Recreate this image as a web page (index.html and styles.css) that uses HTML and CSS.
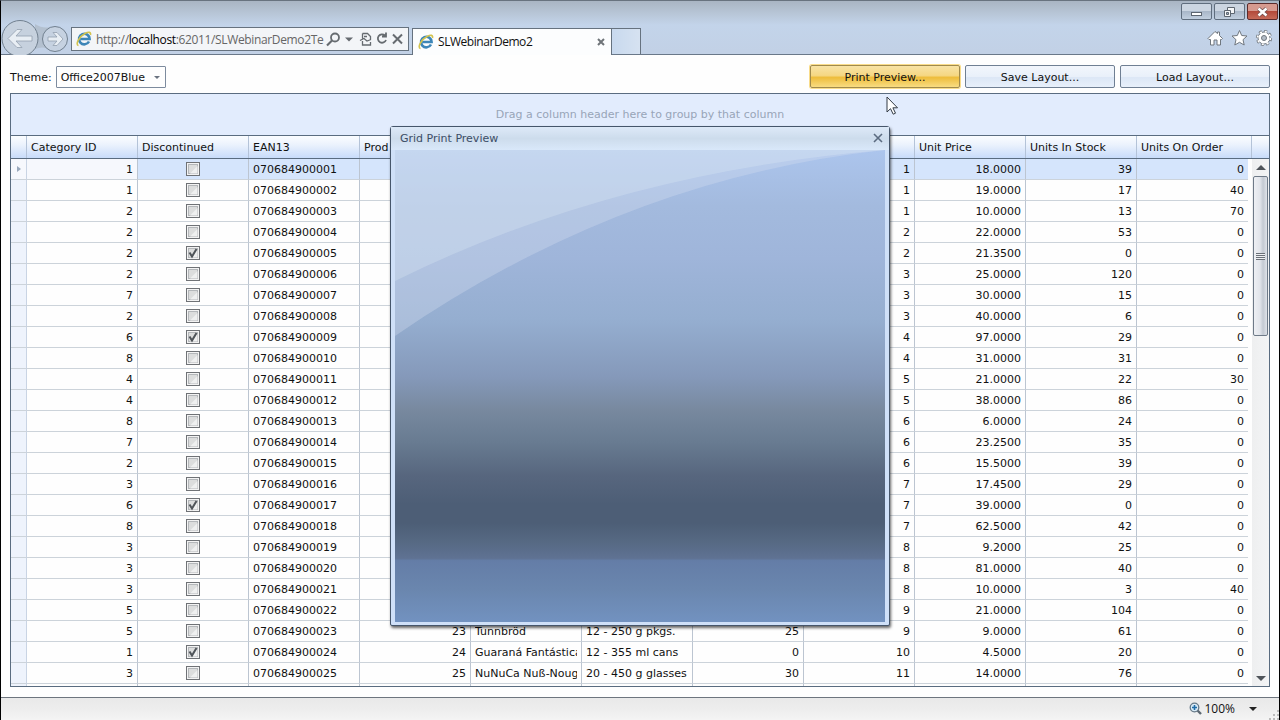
FILE: index.html
```html
<!DOCTYPE html>
<html lang="en">
<head>
  <meta charset="UTF-8">
  <title>SLWebinarDemo2</title>
  <link rel="stylesheet" href="styles.css">
</head>
<body>
  <!-- shared icon -->
  <svg width="0" height="0" class="defs">
    <symbol id="ie" viewBox="0 0 16 16">
      <path d="M13 10.5A5.3 5.3 0 1 1 13.6 8H4.5" fill="none" stroke="#3d86b8" stroke-width="2.6"/>
      <path d="M2.5 14.5C-1 14 3 5.500 9 2.500c4-2 6-1.500 5.500 1.500" fill="none" stroke="#d3c34d" stroke-width="1.600"/>
    </symbol>
  </svg>

  <div class="window">
    <header class="chrome">
      <div class="nav">
        <svg width="70" height="37" viewBox="0 0 70 37">
          <path d="M34 6q8 5 15 3v22q-8-3-15 0z" fill="#b3c0cf"/>
          <circle cx="19" cy="20.500" r="18" fill="#c6d1de" stroke="#71808f"/>
          <circle cx="54" cy="21" r="12.500" fill="#c6d2e1" stroke="#71808f"/>
          <path d="M7 20.500l9-9h5l-6 6.500h16v5H15l6 6.500h-5z" fill="#e8eef4" stroke="#93a0ae" stroke-width=".8"/>
          <path d="M62 21l-6-6.500h-4l4 4.500h-9v4h9l-4 4.500h4z" fill="#e8eef4" stroke="#93a0ae" stroke-width=".8"/>
        </svg>
      </div>
      <div class="address">
        <svg width="16" height="16"><use href="#ie"/></svg>
        <span class="url">http://<b>localhost</b>:62011/SLWebinarDemo2Te</span>
        <svg class="address-icons" width="82" height="20" viewBox="0 0 82 20" fill="none" stroke="#666b70" stroke-width="1.800">
          <circle cx="9" cy="8.500" r="4"/>
          <path d="M6 11.500l-5 5" stroke-width="2.200"/>
          <path d="M19 8.500h8l-4 4z" fill="#666b70" stroke="none"/>
          <path d="M36.500 4.500h5l3 3v3M36.500 4.500v5M36.500 12v4h8v-3M34 11.500l4-2 3 2.500 4-1.500M38 7.500h3" stroke-width="1.300"/>
          <path d="M59 6.500A4.200 4.200 0 1 0 60 11M60 3.500v4h-4"/>
          <path d="M67 5.500l9 9M76 5.500l-9 9" stroke-width="2"/>
        </svg>
      </div>
      <div class="tab">
        <svg width="16" height="16"><use href="#ie"/></svg>
        <span>SLWebinarDemo2</span>
        <svg class="tab-close" width="8" height="8" viewBox="0 0 8 8"><path d="M1 1l6 6M7 1L1 7" stroke="#6f7479" stroke-width="2"/></svg>
      </div>
      <div class="new-tab"></div>
      <div class="window-tools">
        <div class="window-buttons">
          <span><svg width="29" height="15" viewBox="0 0 29 15"><rect x="9.500" y="8.500" width="10" height="3" fill="#fff" stroke="#5d6670"/></svg></span>
          <span><svg width="29" height="15" viewBox="0 0 29 15" fill="#f4f6f8" stroke="#5d6670"><path d="M12.500 3.500h7v6h-7z"/><path d="M9.500 6.500h6v6h-6z"/><path d="M11.500 8.500h2v2h-2z" fill="#9fb0c2"/></svg></span>
          <span class="close"><svg width="29" height="15" viewBox="0 0 29 15"><path d="M10.500 4.500l8 7M18.500 4.500l-8 7" stroke="#6d4a4a" stroke-width="4"/><path d="M10.500 4.500l8 7M18.500 4.500l-8 7" stroke="#fff" stroke-width="2.500"/></svg></span>
        </div>
        <svg class="tools" width="68" height="18" viewBox="0 0 68 18" fill="#fff" stroke="#70777e">
          <path d="M2 9.500L9 2.500l2.500 2V3h2v3.500L16.500 9.500l-1 1H14.500V16h-3.500v-5H8v5H4.500v-5.500H3z"/>
          <path d="M33.500 1.500l2.200 5 5.300.5-4 3.700 1.200 5.300-4.700-2.700-4.700 2.700L30 10.700 26 7l5.300-.5z"/>
          <g>
            <circle cx="58" cy="9" r="6.800" fill="none" stroke-width="2.600" stroke-dasharray="3 2.340"/>
            <circle cx="58" cy="9" r="6" stroke="#70777e"/>
            <circle cx="58" cy="9" r="6.400" fill="none" stroke="#fff" stroke-width="1.800" stroke-dasharray="2 3.030"/>
            <circle cx="58" cy="9" r="2.500" fill="#b5bec8"/>
          </g>
        </svg>
      </div>
    </header>

    <main class="page">
      <div class="toolbar">
        <label>Theme:</label>
        <div class="select">Office2007Blue<i class="arrow"></i></div>
        <button class="btn hot">Print Preview...</button>
        <button class="btn">Save Layout...</button>
        <button class="btn">Load Layout...</button>
      </div>

      <div class="grid">
        <div class="group-panel">Drag a column header here to group by that column</div>
        <div class="row head">
          <span></span><span>Category ID</span><span>Discontinued</span><span>EAN13</span>
          <span>Prod</span><span></span><span></span><span></span><span></span>
          <span>Unit Price</span><span>Units In Stock</span><span class="last">Units On Order</span>
        </div>
        <div class="grid-body">
          <div class="rows" id="rows"></div>
          <div class="scrollbar">
            <i class="up"></i>
            <div class="thumb"><i></i></div>
            <i class="down"></i>
          </div>
        </div>
      </div>
    </main>

    <footer class="status">
      <svg width="13" height="13" viewBox="0 0 13 13"><path d="M8 8l4 4" stroke="#5d6872" stroke-width="2.400"/><circle cx="5.500" cy="5.500" r="4.300" fill="#d9ebf7" stroke="#657887" stroke-width="1.300"/><path d="M3 5.500h5M5.500 3v5" stroke="#1f6da8" stroke-width="1.600"/></svg>
      <span>100%</span>
      <i class="arrow"></i>
      <svg class="grip" width="10" height="10" viewBox="0 0 10 10" fill="#bbb"><path d="M8 0h2v2H8zM8 4h2v2H8zM8 8h2v2H8zM4 4h2v2H4zM4 8h2v2H4zM0 8h2v2H0z"/></svg>
    </footer>
  </div>

  <div class="dialog">
    <div class="dialog-title">
      <span>Grid Print Preview</span>
      <svg width="10" height="10" viewBox="0 0 10 10"><path d="M1 1l8 8M9 1L1 9" stroke="#5b6b80" stroke-width="1.600"/></svg>
    </div>
    <div class="dialog-body">
      <svg width="490" height="190" viewBox="0 0 490 190">
        <path d="M0 0H490Q230 28 0 186z" fill="#d5dff0" fill-opacity=".34"/>
        <path d="M0 0H490Q220 22 0 131z" fill="#dfeaf5" fill-opacity=".3"/>
      </svg>
    </div>
  </div>

  <svg class="cursor" width="14" height="20" viewBox="0 0 14 20"><path d="M1 1v15l3.500-3.300 2.700 5.500 2.300-1-2.600-5.400h4.600z" fill="#fff" stroke="#333b45"/></svg>

  <script src="script.js"></script>
</body>
</html>
```
FILE: styles.css
```css
* {
  box-sizing: border-box;
}
body {
  margin: 0;
  width: 1280px;
  height: 720px;
  overflow: hidden;
  font: 11px "DejaVu Sans", Verdana, sans-serif;
  color: #111;
}
.defs {
  position: absolute;
}
.window {
  height: 720px;
  display: flex;
  flex-direction: column;
  border: 1px solid #000;
  border-top-color: #68737f;
  border-bottom: 0;
}

/* browser frame */
.chrome {
  height: 54px;
  flex: none;
  display: flex;
  align-items: flex-end;
  background: linear-gradient(#a9b5c3, #b7c5d6 12px, #c3d4ea 24px, #c2d1e6 50px);
  border-bottom: 1px solid #6a7889;
  font: 12px "Open Sans", "Segoe UI", sans-serif;
}
.nav {
  width: 70px;
  height: 37px;
  margin-bottom: -1px;
  overflow: hidden;
}
.nav svg {
  display: block;
}
.address {
  width: 338px;
  height: 24px;
  margin-bottom: 3px;
  padding: 0 0 0 4px;
  display: flex;
  align-items: center;
  border: 1px solid #66727f;
  background: #f3f5f8;
}
.url {
  width: 228px;
  margin-left: 4px;
  white-space: nowrap;
  letter-spacing: -.36px;
  color: #666;
}
.url b {
  font-weight: normal;
  color: #000;
}
.address-icons {
  margin-left: 2px;
}
.tab {
  width: 200px;
  height: 27px;
  margin: 0 0 -1px 3px;
  padding: 0 6px 0 5px;
  display: flex;
  align-items: center;
  gap: 4px;
  border: 1px solid #66727f;
  border-bottom: 0;
  background: #fcfdfe;
}
.tab span {
  margin-bottom: 1px;
  letter-spacing: -.45px;
}
.tab-close {
  margin-left: auto;
}
.new-tab {
  width: 29px;
  height: 26px;
  border: 1px solid #66727f;
  border-left: 0;
  border-bottom: 0;
  background: linear-gradient(90deg, #c8d9ee, #d6e2f1);
}
.window-tools {
  height: 53px;
  margin-left: auto;
  padding: 2px 1px 0 0;
  display: flex;
  flex-direction: column;
  align-items: flex-end;
  gap: 9px;
}
.tools {
  margin-right: 4px;
}
.window-buttons {
  display: flex;
  gap: 2px;
}
.window-buttons span {
  width: 31px;
  height: 17px;
  border: 1px solid #5f6d7d;
  border-radius: 2px;
  background: linear-gradient(#cbd5e1 50%, #a9b7c8 50%, #c1cfdf);
}
.window-buttons svg {
  display: block;
}
.window-buttons .close {
  border-color: #5c2c2c;
  background: linear-gradient(#d79a8f 50%, #b34a3b 50%, #c66a58);
}

/* page */
.page {
  flex: 1;
  padding: 9px 9px 0;
  background: #fefefe;
}
.toolbar {
  display: flex;
  align-items: center;
  gap: 5px;
  height: 25px;
  margin-bottom: 4px;
}
.toolbar label {
  padding-top: 1px;
}
.select {
  width: 110px;
  height: 22px;
  margin: 0 auto 0 -1px;
  padding: 1px 5px 0 4px;
  display: flex;
  align-items: center;
  justify-content: space-between;
  border: 1px solid #7d8b9e;
  border-radius: 1px;
}
.arrow {
  border: 3px solid transparent;
  border-top: 3px solid #6a7380;
  border-bottom: 0;
}
.btn {
  width: 150px;
  height: 23px;
  padding: 1px 0 0;
  border: 1px solid #6f7f93;
  border-radius: 2px;
  background: linear-gradient(#f2f6fc, #e9f0fa 50%, #dce7f6 55%, #e8f0fb);
  font: inherit;
  color: #111;
}
.btn.hot {
  border-color: #a08a4c;
  background: linear-gradient(#f8e3a6, #f5d783 45%, #eebd3c 55%, #f8dc82);
  box-shadow: 0 0 0 1px #f9dc8a;
}

/* data grid */
.grid {
  width: 1260px;
  height: 594px;
  display: flex;
  flex-direction: column;
  border: 1px solid #5a6c80;
}
.group-panel {
  height: 41px;
  flex: none;
  line-height: 42px;
  text-align: center;
  color: #98a5b8;
  background: #e2ecfd;
}
.row {
  display: grid;
  grid-template-columns: 16px repeat(11, 111px);
  height: 21px;
  line-height: 21px;
}
.row > * {
  padding: 0 4px;
  overflow: hidden;
  white-space: nowrap;
  border-right: 1px solid #bcc5d1;
  border-bottom: 1px solid #ccd3da;
}
.row .num {
  text-align: right;
}
.row > :last-child {
  border-right: 0;
}
.row .clip {
  overflow: hidden;
}
.row .ind {
  padding: 0;
  display: flex;
  align-items: center;
  justify-content: center;
  background: #eef3fc;
  border-right-color: #c9d4e4;
}
.row .ind i {
  border: 3px solid transparent;
  border-left: 4px solid #9aa9bd;
  border-right: 0;
}
.row.current > * {
  background: #d5e5fc;
}
.row.current > :nth-child(-n+2) {
  background: #f6f8fd;
}
.row.head {
  height: 24px;
  flex: none;
  grid-template-columns: 16px repeat(10, 111px) 115px;
  line-height: 23px;
  border-top: 1px solid #5a6c80;
  border-bottom: 1px solid #5a6c80;
  background: linear-gradient(#fbfdff, #ebf2fd 40%, #c8dcfa);
}
.row.head > * {
  border-bottom: 0;
  border-right-color: #b4c3d8;
}
.row.head > .last {
  border-right: 1px solid #b4c3d8;
}
.box {
  display: block;
  margin: 3px auto 0;
  width: 14px;
  height: 14px;
}
.grid-body {
  flex: 1;
  min-height: 0;
  display: flex;
  justify-content: space-between;
  overflow: hidden;
}
.scrollbar {
  width: 17px;
  padding: 6px 1px 5px;
  display: flex;
  flex-direction: column;
  align-items: center;
  background: linear-gradient(90deg, #eeeff0, #f3f4f5);
}
.up, .down {
  border: 5px solid transparent;
}
.up {
  border-top: 0;
  border-bottom-color: #50555b;
}
.down {
  margin-top: auto;
  border-bottom: 0;
  border-top-color: #50555b;
}
.thumb {
  width: 15px;
  height: 160px;
  margin-top: 6px;
  display: flex;
  align-items: center;
  justify-content: center;
  border: 1px solid #6e7a88;
  border-radius: 2px;
  background: linear-gradient(90deg, #eef0f4, #e2e5eb 45%, #c3c9d2 70%, #dfe3e9);
}
.thumb i {
  width: 9px;
  height: 7px;
  background: repeating-linear-gradient(#6a7078 0 1px, #eef0f3 1px 2px);
}

.status {
  height: 23px;
  flex: none;
  display: flex;
  align-items: center;
  justify-content: flex-end;
  border-top: 1px solid #6d757e;
  background: linear-gradient(#e9e9e9, #ededed 50%, #f4f4f4);
  font: 12px "Open Sans", "Segoe UI", sans-serif;
}
.status svg:first-child {
  margin-bottom: 2px;
}
.status span {
  margin: 0 14px 2px 2px;
}
.status .arrow {
  border-width: 4px 4px 0;
  border-top-color: #222;
}
.grip {
  align-self: flex-end;
  margin-left: 12px;
}

/* print preview window */
.dialog {
  position: absolute;
  left: 390px;
  top: 126px;
  width: 500px;
  height: 500px;
  display: flex;
  flex-direction: column;
  border: 1px solid #46566b;
  border-radius: 3px 3px 2px 2px;
  background: #cfe0f8;
  box-shadow: 1px 2px 3px rgba(0, 0, 0, .6);
}
.dialog-title {
  height: 23px;
  flex: none;
  display: flex;
  align-items: center;
  justify-content: space-between;
  padding: 0 6px 1px 9px;
  background: linear-gradient(#dde9f8, #cddcec 50%, #d9e8fa);
  color: #3b4d66;
}
.dialog-body {
  flex: 1;
  margin: 0 4px 3px;
  background: linear-gradient(#acc5ed, #a3bade 12%, #9fb5da 23%, #95aed0 36%, #8599ba 48%, #78899f 55%, #687b91 62%, #57667e 69%, #4d5e76 75%, #4d5e76 79%, #566983 83%, #5f7293 86.5%, #647da7 87%, #6a86ae 93%, #7292c0);
}
.dialog-body svg {
  display: block;
}
.cursor {
  position: absolute;
  left: 886px;
  top: 96px;
}
```
FILE: script.js
```js
// category, discontinued, supplier, price, in stock, on order
const products = [
  [1, 0, 1, '18.0000', 39, 0],
  [1, 0, 1, '19.0000', 17, 40],
  [2, 0, 1, '10.0000', 13, 70],
  [2, 0, 2, '22.0000', 53, 0],
  [2, 1, 2, '21.3500', 0, 0],
  [2, 0, 3, '25.0000', 120, 0],
  [7, 0, 3, '30.0000', 15, 0],
  [2, 0, 3, '40.0000', 6, 0],
  [6, 1, 4, '97.0000', 29, 0],
  [8, 0, 4, '31.0000', 31, 0],
  [4, 0, 5, '21.0000', 22, 30],
  [4, 0, 5, '38.0000', 86, 0],
  [8, 0, 6, '6.0000', 24, 0],
  [7, 0, 6, '23.2500', 35, 0],
  [2, 0, 6, '15.5000', 39, 0],
  [3, 0, 7, '17.4500', 29, 0],
  [6, 1, 7, '39.0000', 0, 0],
  [8, 0, 7, '62.5000', 42, 0],
  [3, 0, 8, '9.2000', 25, 0],
  [3, 0, 8, '81.0000', 40, 0],
  [3, 0, 8, '10.0000', 3, 40],
  [5, 0, 9, '21.0000', 104, 0],
  [5, 0, 9, '9.0000', 61, 0],
  [1, 1, 10, '4.5000', 20, 0],
  [3, 0, 11, '14.0000', 76, 0]
];

// product id -> name, quantity per unit, reorder level
const details = {
  23: ['Tunnbröd', '12 - 250 g pkgs.', 25],
  24: ['Guaraná Fantástica', '12 - 355 ml cans', 0],
  25: ['NuNuCa Nuß-Noug', '20 - 450 g glasses', 30]
};

function checkbox(checked) {
  return `<svg class="box" viewBox="0 0 14 14">
    <rect x=".5" y=".5" width="13" height="13" fill="#f3f3f3" stroke="#6f7276"/>
    <rect x="2.500" y="2.500" width="9" height="9" fill="#dcdddd" stroke="#b4b7ba"/>
    <path d="M4 11.500h7.500V4z" fill="#eff0f0"/>
    ${checked ? '<path d="M3.500 6.500l2.500 4L10.500 3" fill="none" stroke="#50555a" stroke-width="2"/>' : ''}
  </svg>`;
}

const rows = document.getElementById('rows');
products.forEach((p, i) => {
  const id = i + 1;
  const d = details[id] || ['', '', ''];
  const row = document.createElement('div');
  row.className = i === 0 ? 'row current' : 'row';
  row.innerHTML = `
    <span class="ind">${i === 0 ? '<i></i>' : ''}</span>
    <span class="num">${p[0]}</span>
    <span>${checkbox(p[1])}</span>
    <span>0706849000${String(id).padStart(2, '0')}</span>
    <span class="num">${details[id] ? id : ''}</span>
    <span><div class="clip">${d[0]}</div></span>
    <span>${d[1]}</span>
    <span class="num">${d[2]}</span>
    <span class="num">${p[2]}</span>
    <span class="num">${p[3]}</span>
    <span class="num">${p[4]}</span>
    <span class="num">${p[5]}</span>`;
  rows.appendChild(row);
});

// top of the next row
const rest = document.createElement('div');
rest.className = 'row';
rest.innerHTML = '<span class="ind"></span>' + '<span></span>'.repeat(11);
rows.appendChild(rest);
```
